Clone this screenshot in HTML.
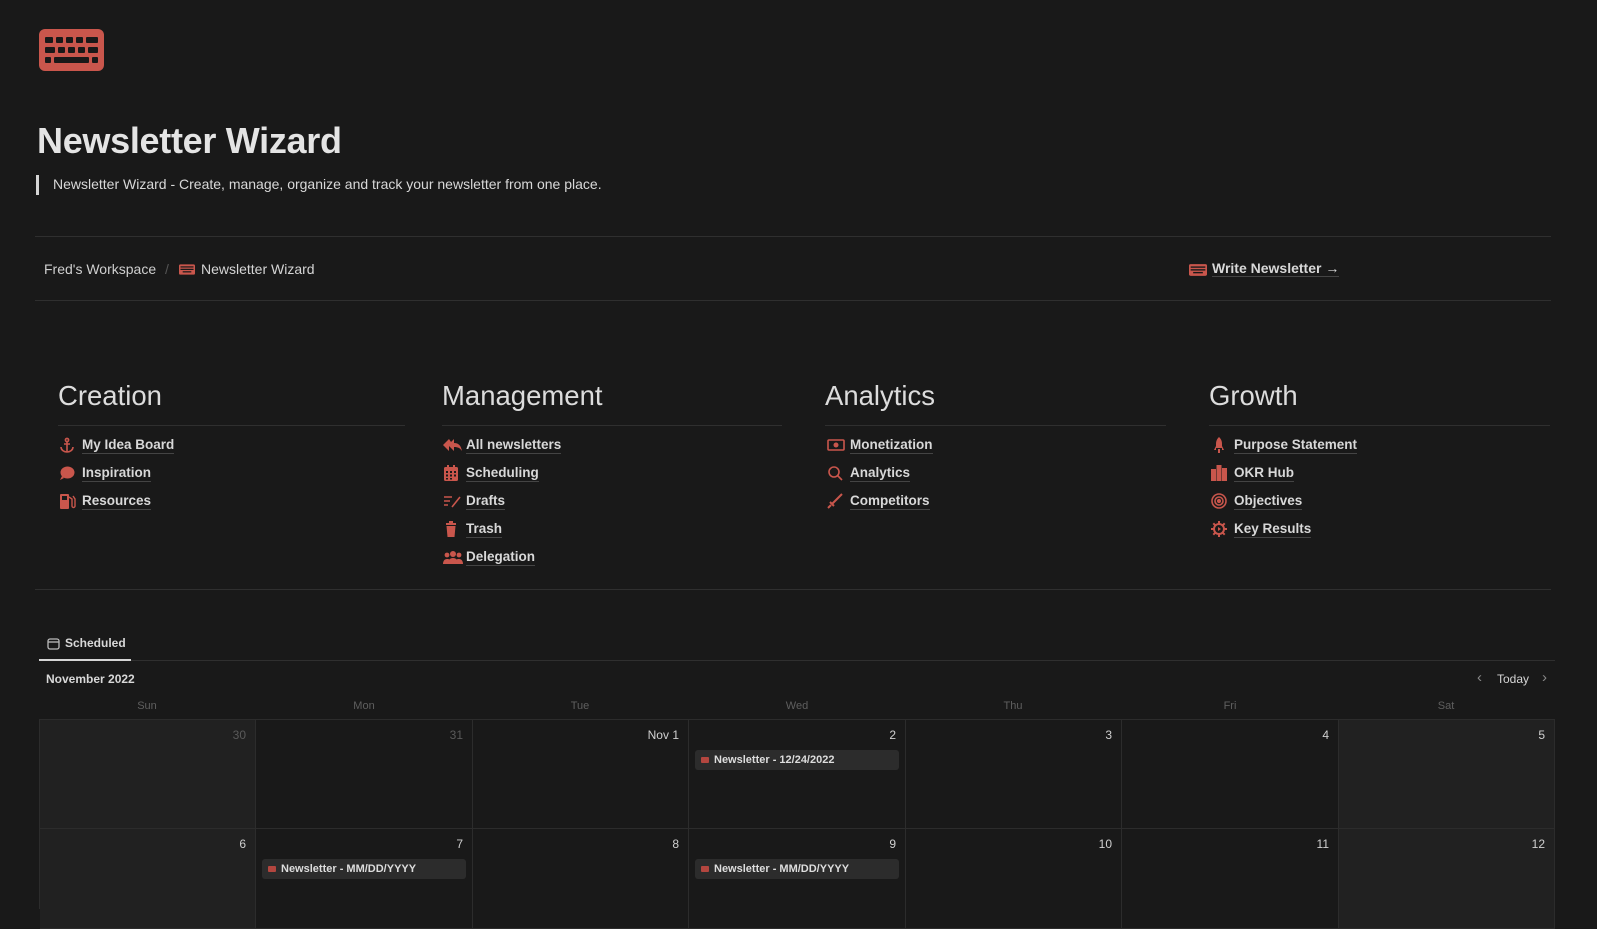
<!DOCTYPE html>
<html><head><meta charset="utf-8"><style>
*{margin:0;padding:0;box-sizing:border-box}
body{width:1597px;height:907px;background:#191919;color:#d5d5d5;font-family:"Liberation Sans",sans-serif;position:relative;overflow:hidden}
.a{position:absolute;white-space:nowrap}
.hr{position:absolute;height:1px;background:#2f2f2f}
h2{position:absolute;font-size:27.5px;font-weight:normal;color:#dcdcdc;line-height:30px}
.it{position:absolute;font-size:13.5px;font-weight:bold;line-height:18px;color:#d8d8d8}
.it span{border-bottom:1px solid #444;padding-bottom:1px}
.it svg{position:absolute;left:-23px;top:1px}
.wd{position:absolute;top:700px;font-size:11px;color:#5f5f5f;width:216px;text-align:center}
.cell{position:absolute;border-right:1px solid #2c2c2c;border-bottom:1px solid #2c2c2c}
.num{position:absolute;right:9px;top:8px;font-size:12px;color:#d0d0d0}
.pill{position:absolute;left:6px;right:6px;height:20px;background:#2c2c2c;border-radius:3px;font-size:11px;font-weight:bold;color:#ddd;line-height:20px;padding-left:19px}
.pill:before{content:"";position:absolute;left:6px;top:7px;width:8px;height:6px;background:#b3463f;border-radius:1px}
</style></head><body>
<svg class="a" style="left:39px;top:29px" width="65" height="42" viewBox="0 0 65 42"><rect width="65" height="42" rx="6" fill="#c9564c"/><g fill="#191919"><rect x="6" y="8" width="8" height="6" rx="1"/><rect x="17" y="8" width="7" height="6" rx="1"/><rect x="27" y="8" width="7" height="6" rx="1"/><rect x="37" y="8" width="7" height="6" rx="1"/><rect x="47" y="8" width="12" height="6" rx="1"/><rect x="6" y="18" width="10" height="6" rx="1"/><rect x="19" y="18" width="7" height="6" rx="1"/><rect x="29" y="18" width="7" height="6" rx="1"/><rect x="39" y="18" width="7" height="6" rx="1"/><rect x="49" y="18" width="10" height="6" rx="1"/><rect x="6" y="28" width="6" height="6" rx="1"/><rect x="15" y="28" width="35" height="6" rx="1"/><rect x="53" y="28" width="6" height="6" rx="1"/></g></svg>
<div class="a" style="left:37px;top:120px;font-size:36px;font-weight:bold;color:#e4e4e4;letter-spacing:-0.3px">Newsletter Wizard</div>
<div class="a" style="left:36px;top:175px;width:3px;height:20px;background:#d5d5d5"></div>
<div class="a" style="left:53px;top:176px;font-size:14px;color:#d8d8d8">Newsletter Wizard - Create, manage, organize and track your newsletter from one place.</div>
<div class="hr" style="left:35px;width:1516px;top:236px"></div>
<div class="a" style="left:44px;top:261px;font-size:14px;color:#cfcfcf">Fred's Workspace <span style="color:#555;margin:0 5px">/</span></div>
<svg class="a" style="left:179px;top:264px" width="16" height="11" viewBox="0 0 65 42"><rect width="65" height="42" rx="6" fill="#c9564c"/><g fill="#191919"><rect x="6" y="8" width="53" height="5"/><rect x="6" y="18" width="53" height="5"/><rect x="15" y="28" width="35" height="5"/></g></svg>
<div class="a" style="left:201px;top:261px;font-size:14px;color:#d5d5d5">Newsletter Wizard</div>
<svg class="a" style="left:1189px;top:264px" width="18" height="12" viewBox="0 0 65 42"><rect width="65" height="42" rx="6" fill="#c9564c"/><g fill="#191919"><rect x="6" y="8" width="53" height="5"/><rect x="6" y="18" width="53" height="5"/><rect x="15" y="28" width="35" height="5"/></g></svg>
<div class="a" style="left:1212px;top:260px;font-size:14px;font-weight:bold;color:#d8d8d8;border-bottom:1px solid #444">Write Newsletter →</div>
<div class="hr" style="left:35px;width:1516px;top:300px"></div>

<h2 style="left:58px;top:381px">Creation</h2>
<h2 style="left:442px;top:381px">Management</h2>
<h2 style="left:825px;top:381px">Analytics</h2>
<h2 style="left:1209px;top:381px">Growth</h2>
<div class="hr" style="left:58px;width:347px;top:425px"></div>
<div class="hr" style="left:442px;width:340px;top:425px"></div>
<div class="hr" style="left:825px;width:341px;top:425px"></div>
<div class="hr" style="left:1209px;width:341px;top:425px"></div>

<div class="it" style="left:82px;top:436px"><svg width="16" height="16" viewBox="0 0 16 16" fill="none" stroke="#c9564c" stroke-width="1.6"><circle cx="8" cy="3" r="1.6"/><path d="M8 4.6V15M5 7h6M2 10c0 3 3 5 6 5s6-2 6-5"/></svg><span>My Idea Board</span></div>
<div class="it" style="left:82px;top:464px"><svg width="16" height="16" viewBox="0 0 16 16"><ellipse cx="8.5" cy="7.5" rx="7" ry="6" fill="#c9564c"/><path d="M3 11l-2 4 4-2z" fill="#c9564c"/></svg><span>Inspiration</span></div>
<div class="it" style="left:82px;top:492px"><svg width="17" height="16" viewBox="0 0 17 16"><rect x="1" y="1" width="9" height="15" rx="1" fill="#c9564c"/><rect x="3" y="3" width="5" height="4" fill="#191919"/><path d="M10 4l3 2v7a1.5 1.5 0 003 0V6l-2-3" fill="none" stroke="#c9564c" stroke-width="1.4"/></svg><span>Resources</span></div>
<div class="it" style="left:466px;top:436px"><svg width="20" height="16" viewBox="0 0 20 16" fill="#c9564c"><path d="M6 2L0 8l6 6V9l4-1z"/><path d="M11 2L5 8l6 6v-4c4 0 6 1 8 4-1-5-3-8-8-8z"/></svg><span>All newsletters</span></div>
<div class="it" style="left:466px;top:464px"><svg width="16" height="16" viewBox="0 0 16 16"><rect x="1" y="2" width="14" height="14" rx="1.5" fill="#c9564c"/><g fill="#191919"><rect x="3" y="6" width="2" height="2"/><rect x="7" y="6" width="2" height="2"/><rect x="11" y="6" width="2" height="2"/><rect x="3" y="9.5" width="2" height="2"/><rect x="7" y="9.5" width="2" height="2"/><rect x="11" y="9.5" width="2" height="2"/><rect x="3" y="13" width="2" height="1.5"/><rect x="7" y="13" width="2" height="1.5"/></g><rect x="4" y="0" width="2" height="3" fill="#c9564c"/><rect x="10" y="0" width="2" height="3" fill="#c9564c"/></svg><span>Scheduling</span></div>
<div class="it" style="left:466px;top:492px"><svg width="18" height="16" viewBox="0 0 18 16" stroke="#c9564c" stroke-width="1.6"><path d="M1 4h8M1 8h6M1 12h4M9 14L17 4"/></svg><span>Drafts</span></div>
<div class="it" style="left:466px;top:520px"><svg width="16" height="16" viewBox="0 0 16 16" fill="#c9564c"><rect x="3" y="2" width="10" height="2"/><rect x="6" y="0" width="4" height="2"/><path d="M3.5 5h9l-1 11h-7z"/></svg><span>Trash</span></div>
<div class="it" style="left:466px;top:548px"><svg width="20" height="16" viewBox="0 0 20 16" fill="#c9564c"><circle cx="10" cy="5" r="3"/><circle cx="4" cy="6" r="2.4"/><circle cx="16" cy="6" r="2.4"/><path d="M5 15c0-4 2-6 5-6s5 2 5 6z"/><path d="M0 15c0-3 1.5-5 4-5s3 1 3 1l-1 4z"/><path d="M20 15c0-3-1.5-5-4-5s-3 1-3 1l1 4z"/></svg><span>Delegation</span></div>
<div class="it" style="left:850px;top:436px"><svg width="18" height="16" viewBox="0 0 18 16"><rect x="1" y="3" width="16" height="10" rx="1" fill="none" stroke="#c9564c" stroke-width="1.6"/><circle cx="9" cy="8" r="2.5" fill="#c9564c"/></svg><span>Monetization</span></div>
<div class="it" style="left:850px;top:464px"><svg width="16" height="16" viewBox="0 0 16 16" fill="none" stroke="#c9564c" stroke-width="1.6"><circle cx="7" cy="7" r="5"/><path d="M10.5 10.5L15 15"/></svg><span>Analytics</span></div>
<div class="it" style="left:850px;top:492px"><svg width="16" height="16" viewBox="0 0 16 16" stroke="#c9564c" stroke-width="2"><path d="M15 1L5 11M3 9l4 4M4 12l-3 3"/></svg><span>Competitors</span></div>
<div class="it" style="left:1234px;top:436px"><svg width="16" height="16" viewBox="0 0 16 16" fill="#c9564c"><path d="M8 0c2 2 3 4 3 7v4H5V7c0-3 1-5 3-7z"/><path d="M5 9l-2 4h2zM11 9l2 4h-2z"/><rect x="7" y="12" width="2" height="4"/></svg><span>Purpose Statement</span></div>
<div class="it" style="left:1234px;top:464px"><svg width="16" height="16" viewBox="0 0 16 16" fill="#c9564c"><rect x="0" y="4" width="5" height="12"/><rect x="5.5" y="0" width="5" height="16"/><rect x="11" y="3" width="5" height="13"/></svg><span>OKR Hub</span></div>
<div class="it" style="left:1234px;top:492px"><svg width="16" height="16" viewBox="0 0 16 16" fill="none" stroke="#c9564c" stroke-width="1.6"><circle cx="8" cy="8" r="7"/><circle cx="8" cy="8" r="4"/><circle cx="8" cy="8" r="1.3" fill="#c9564c"/></svg><span>Objectives</span></div>
<div class="it" style="left:1234px;top:520px"><svg width="16" height="16" viewBox="0 0 16 16" fill="none" stroke="#c9564c" stroke-width="2"><circle cx="8" cy="8" r="5"/><path d="M8 0v3M8 13v3M0 8h3M13 8h3M2.3 2.3l2 2M11.7 11.7l2 2M2.3 13.7l2-2M11.7 4.3l2-2"/><path d="M7 6l3 2-3 2z" fill="#c9564c" stroke="none"/></svg><span>Key Results</span></div>

<div class="hr" style="left:35px;width:1516px;top:589px"></div>

<svg class="a" style="left:47px;top:638px" width="13" height="12" viewBox="0 0 13 12" fill="none" stroke="#bbb" stroke-width="1.3"><rect x="1" y="1" width="11" height="10" rx="2"/><path d="M1 4h11"/></svg>
<div class="a" style="left:65px;top:636px;font-size:12px;font-weight:bold;color:#d8d8d8">Scheduled</div>
<div class="hr" style="left:39px;width:1516px;top:660px"></div>
<div class="a" style="left:39px;top:659px;width:92px;height:2px;background:#d5d5d5"></div>
<div class="a" style="left:46px;top:672px;font-size:12px;font-weight:bold;color:#d8d8d8">November 2022</div>
<div class="a" style="left:1477px;top:669px;font-size:15px;color:#888">‹</div>
<div class="a" style="left:1497px;top:672px;font-size:12px;color:#d5d5d5">Today</div>
<div class="a" style="left:1542px;top:669px;font-size:15px;color:#888">›</div>

<div class="wd" style="left:39px">Sun</div><div class="wd" style="left:256px">Mon</div><div class="wd" style="left:472px">Tue</div><div class="wd" style="left:689px">Wed</div><div class="wd" style="left:905px">Thu</div><div class="wd" style="left:1122px">Fri</div><div class="wd" style="left:1338px">Sat</div>
<div class="hr" style="left:39px;width:1516px;top:719px;background:#2c2c2c"></div>
<div class="a" style="left:39px;top:719px;width:1px;height:190px;background:#2c2c2c"></div>

<div class="cell" style="left:40px;top:720px;width:216px;height:109px;background:#212121"><div class="num" style="color:#5a5a5a">30</div></div>
<div class="cell" style="left:256px;top:720px;width:217px;height:109px"><div class="num" style="color:#5a5a5a">31</div></div>
<div class="cell" style="left:473px;top:720px;width:216px;height:109px"><div class="num">Nov 1</div></div>
<div class="cell" style="left:689px;top:720px;width:217px;height:109px"><div class="num">2</div><div class="pill" style="top:30px">Newsletter - 12/24/2022</div></div>
<div class="cell" style="left:906px;top:720px;width:216px;height:109px"><div class="num">3</div></div>
<div class="cell" style="left:1122px;top:720px;width:217px;height:109px"><div class="num">4</div></div>
<div class="cell" style="left:1339px;top:720px;width:216px;height:109px;background:#212121"><div class="num">5</div></div>

<div class="cell" style="left:40px;top:829px;width:216px;height:100px;background:#212121"><div class="num">6</div></div>
<div class="cell" style="left:256px;top:829px;width:217px;height:100px"><div class="num">7</div><div class="pill" style="top:30px">Newsletter - MM/DD/YYYY</div></div>
<div class="cell" style="left:473px;top:829px;width:216px;height:100px"><div class="num">8</div></div>
<div class="cell" style="left:689px;top:829px;width:217px;height:100px"><div class="num">9</div><div class="pill" style="top:30px">Newsletter - MM/DD/YYYY</div></div>
<div class="cell" style="left:906px;top:829px;width:216px;height:100px"><div class="num">10</div></div>
<div class="cell" style="left:1122px;top:829px;width:217px;height:100px"><div class="num">11</div></div>
<div class="cell" style="left:1339px;top:829px;width:216px;height:100px;background:#212121"><div class="num">12</div></div>
</body></html>
